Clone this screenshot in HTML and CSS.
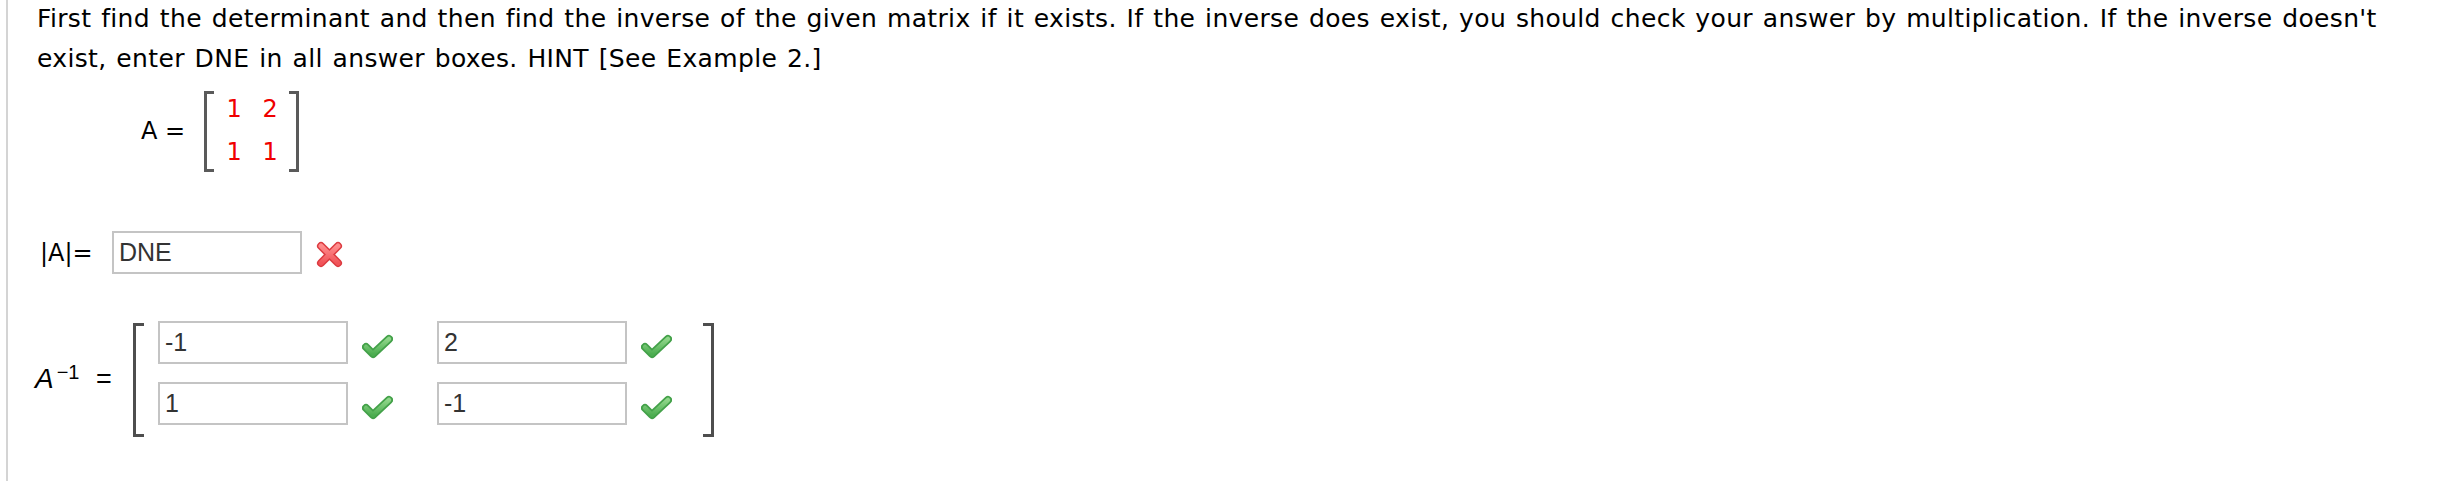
FILE: index.html
```html
<!DOCTYPE html>
<html>
<head>
<meta charset="utf-8">
<title>Matrix inverse</title>
<link rel="stylesheet" href="styles.css">
</head>
<body>
<svg class="defs" width="0" height="0" aria-hidden="true">
  <defs>
    <linearGradient id="chk" x1="0" y1="0" x2="0" y2="1">
      <stop offset="0" stop-color="#8fd689"/>
      <stop offset="1" stop-color="#4cad50"/>
    </linearGradient>
    <linearGradient id="crs" x1="0" y1="0" x2="0" y2="1">
      <stop offset="0" stop-color="#ff8c8c"/>
      <stop offset="1" stop-color="#f05358"/>
    </linearGradient>
  </defs>
</svg>
<div class="page">
  <p class="prompt">First find the determinant and then find the inverse of the given matrix if it exists. If the inverse does exist, you should check your answer by multiplication. If the inverse doesn't exist, enter DNE in all answer boxes. HINT [See Example 2.]</p>

  <div class="def">
    <span class="lhs">A =</span>
    <div class="mat">
      <span class="br br-l"></span>
      <div class="entries">
        <span>1</span><span>2</span>
        <span>1</span><span>1</span>
      </div>
      <span class="br br-r"></span>
    </div>
  </div>

  <div class="det">
    <span class="det-lbl">|A|=</span>
    <input class="ans" type="text" value="DNE">
    <svg class="icon-x" width="27" height="27" viewBox="0 0 27 27">
      <path d="M5 5 L22 22 M22 5 L5 22" fill="none" stroke="#dc3b40" stroke-width="8" stroke-linecap="round"/>
      <path d="M5 5 L22 22 M22 5 L5 22" fill="none" stroke="url(#crs)" stroke-width="5" stroke-linecap="round"/>
    </svg>
  </div>

  <div class="inv">
    <span class="inv-lbl"><i>A</i><sup>−1</sup> =</span>
    <span class="bigbr bigbr-l"></span>
    <div class="cells">
      <div class="cell"><input class="ans" type="text" value="-1"><svg class="icon-ok" width="31" height="25" viewBox="0 0 31 25"><path d="M4 13 L11 20 L27 5" fill="none" stroke="#43a149" stroke-width="8" stroke-linecap="round" stroke-linejoin="round"/><path d="M4 13 L11 20 L27 5" fill="none" stroke="url(#chk)" stroke-width="4.5" stroke-linecap="round" stroke-linejoin="round"/></svg></div>
      <div class="cell"><input class="ans" type="text" value="2"><svg class="icon-ok" width="31" height="25" viewBox="0 0 31 25"><path d="M4 13 L11 20 L27 5" fill="none" stroke="#43a149" stroke-width="8" stroke-linecap="round" stroke-linejoin="round"/><path d="M4 13 L11 20 L27 5" fill="none" stroke="url(#chk)" stroke-width="4.5" stroke-linecap="round" stroke-linejoin="round"/></svg></div>
      <div class="cell"><input class="ans" type="text" value="1"><svg class="icon-ok" width="31" height="25" viewBox="0 0 31 25"><path d="M4 13 L11 20 L27 5" fill="none" stroke="#43a149" stroke-width="8" stroke-linecap="round" stroke-linejoin="round"/><path d="M4 13 L11 20 L27 5" fill="none" stroke="url(#chk)" stroke-width="4.5" stroke-linecap="round" stroke-linejoin="round"/></svg></div>
      <div class="cell"><input class="ans" type="text" value="-1"><svg class="icon-ok" width="31" height="25" viewBox="0 0 31 25"><path d="M4 13 L11 20 L27 5" fill="none" stroke="#43a149" stroke-width="8" stroke-linecap="round" stroke-linejoin="round"/><path d="M4 13 L11 20 L27 5" fill="none" stroke="url(#chk)" stroke-width="4.5" stroke-linecap="round" stroke-linejoin="round"/></svg></div>
    </div>
    <span class="bigbr bigbr-r"></span>
  </div>
</div>
</body>
</html>
```

FILE: styles.css
```css
html, body {
  margin: 0;
  padding: 0;
  background: #ffffff;
}

body {
  font-family: "DejaVu Sans", Verdana, sans-serif;
  color: #000;
}

.defs {
  position: absolute;
  width: 0;
  height: 0;
}

.page {
  margin-left: 6px;
  border-left: 2px solid #d4d4d4;
  padding-left: 29px;
  min-height: 482px;
  box-sizing: border-box;
}

.prompt {
  margin: -1px 0 0 0;
  width: 2400px;
  font-size: 25px;
  letter-spacing: 0.35px;
  word-spacing: 1.5px;
  line-height: 40px;
}

/* A = [matrix] */
.def {
  display: flex;
  align-items: center;
  margin-top: 9px;
  margin-left: 104px;
}

.lhs {
  font-size: 24px;
  margin-right: 19px;
}

.mat {
  display: flex;
  align-items: center;
}

.br {
  width: 7px;
  height: 75px;
  border: 3px solid #5a5a5a;
}

.br-l { border-right: none; }
.br-r { border-left: none; }

.entries {
  display: grid;
  grid-template-columns: 36px 36px;
  line-height: 43px;
  font-size: 24px;
  color: #f00000;
  text-align: center;
  padding: 0 1px 0 2px;
}

/* |A| = */
.det {
  display: flex;
  align-items: center;
  margin-top: 57px;
  margin-left: 3px;
}

.det-lbl {
  font-size: 24px;
  width: 72px;
}

.ans {
  box-sizing: border-box;
  width: 190px;
  height: 43px;
  border: 2px solid #c4c4c4;
  padding: 0 5px;
  margin: 0;
  font-family: "Liberation Sans", Arial, sans-serif;
  font-size: 25px;
  color: #333;
  background: #fff;
  outline: none;
}

.icon-x {
  margin-left: 14px;
  margin-top: 4px;
}

/* A^-1 = [ ... ] */
.inv {
  display: flex;
  align-items: flex-start;
  margin-top: 47px;
  margin-left: -2px;
}

.inv-lbl {
  font-family: "Liberation Sans", Arial, sans-serif;
  font-size: 27px;
  width: 98px;
  margin-top: 40px;
  white-space: nowrap;
}

.inv-lbl i {
  font-style: italic;
  font-size: 28px;
}

.inv-lbl sup {
  font-size: 20px;
  vertical-align: 9px;
  margin-left: 3px;
  margin-right: 9px;
}

.bigbr {
  width: 8px;
  height: 108px;
  margin-top: 2px;
  border: 3px solid #4e4e4e;
}

.bigbr-l { border-right: none; }
.bigbr-r { border-left: none; }

.cells {
  display: grid;
  grid-template-columns: 279px 235px;
  row-gap: 18px;
  margin-left: 14px;
  margin-right: 31px;
}

.cell {
  display: flex;
  align-items: center;
}

.icon-ok {
  margin-left: 14px;
  margin-top: 8px;
}
```
